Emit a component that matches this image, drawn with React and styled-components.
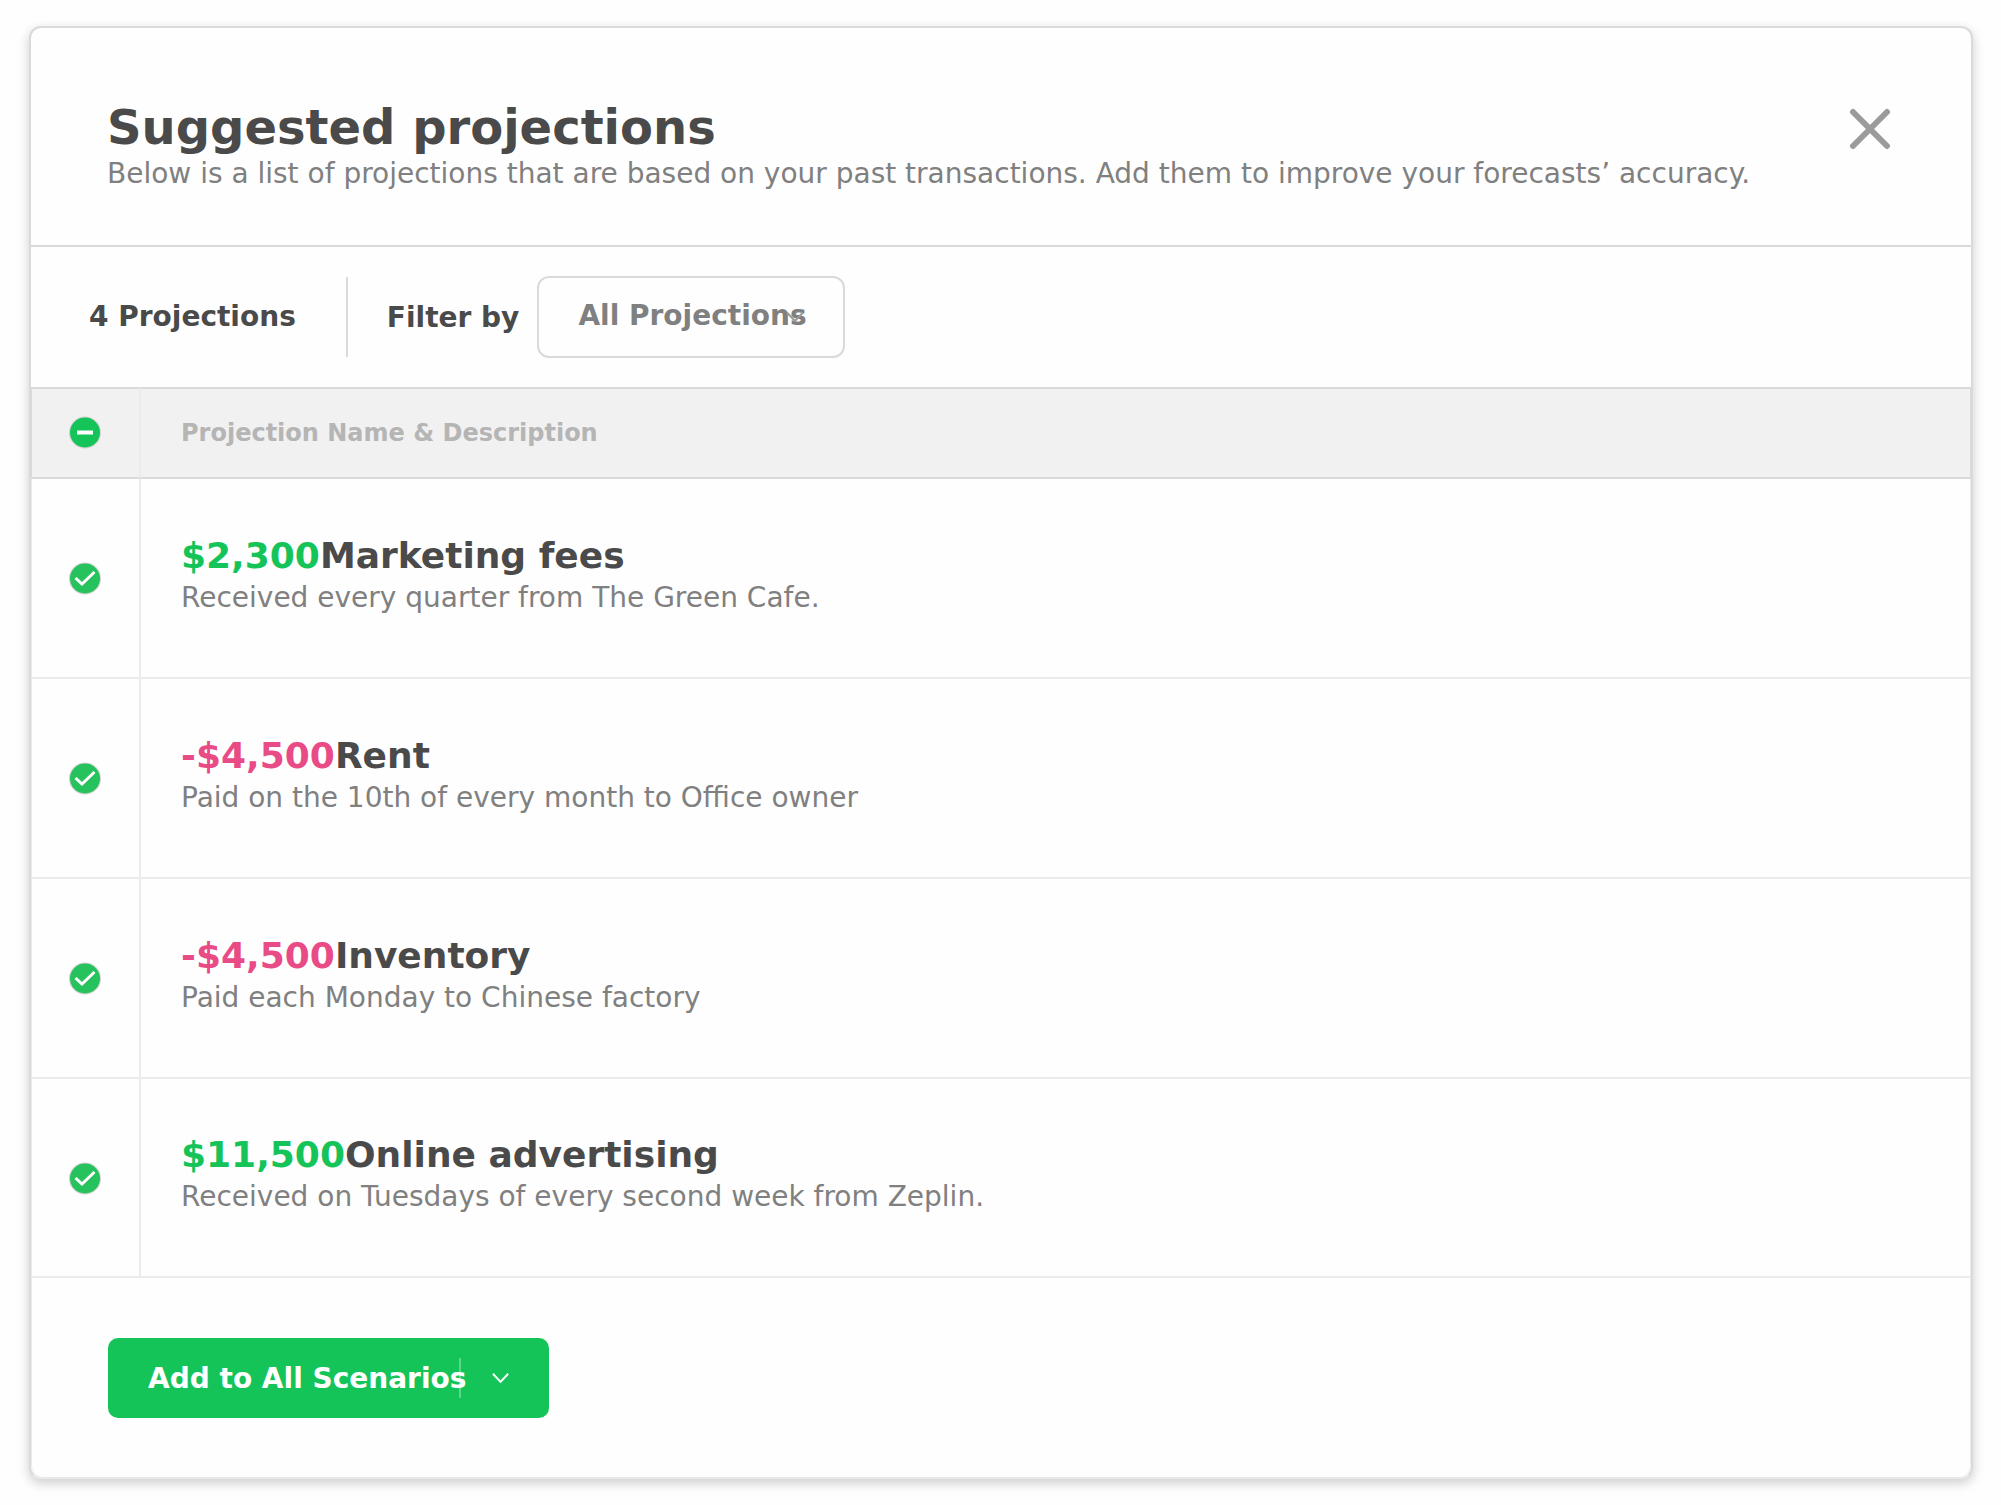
import React, { useState } from "react";
import styled, { createGlobalStyle } from "styled-components";

const Global = createGlobalStyle`
  * { box-sizing: border-box; }
  body {
    margin: 0;
    background: #fefefe;
    font-family: "DejaVu Sans", Verdana, sans-serif;
    color: #4a4a4a;
  }
`;

const Page = styled.main`
  padding: 26px 28px 26px 29px;
`;

const Card = styled.section`
  border: 2px solid #dadada;
  border-bottom-color: #e9e9e9;
  border-radius: 12px;
  background: #fefefe;
  box-shadow: 0 4px 12px rgba(0, 0, 0, 0.2);
`;

const Header = styled.header`
  display: flex;
  justify-content: space-between;
  align-items: flex-start;
  padding: 70px 80px 54px 76px;
  border-bottom: 2px solid #dadada;
`;

const Title = styled.h1`
  margin: 0;
  font-size: 48px;
  line-height: 58px;
  font-weight: 700;
`;

const Copy = styled.p`
  margin: 0;
  font-size: 28px;
  line-height: 35px;
  color: #808080;
`;

const CloseButton = styled.button`
  display: flex;
  margin: 10px 0 0;
  padding: 0;
  border: 0;
  background: none;
  cursor: pointer;
`;

const Toolbar = styled.div`
  display: flex;
  align-items: center;
  height: 140px;
  padding-left: 58px;
  font-size: 28px;
  font-weight: 700;
`;

const Count = styled.span`
  padding-right: 50px;
  line-height: 80px;
  border-right: 2px solid #dadada;
`;

const FilterLabel = styled.label`
  margin: 0 18px 0 39px;
`;

const SelectBox = styled.div`
  position: relative;
  width: 308px;
`;

const Select = styled.select`
  display: block;
  width: 100%;
  height: 82px;
  padding: 0 0 4px 39px;
  appearance: none;
  border: 2px solid #dadada;
  border-radius: 12px;
  background: transparent;
  color: #808080;
  font: inherit;
`;

const SelectArrow = styled.span`
  position: absolute;
  right: 41px;
  top: 35px;
  display: flex;
  pointer-events: none;
`;

const Table = styled.table`
  width: 100%;
  border-collapse: separate;
  border-spacing: 0;
  text-align: left;
`;

const HeadCell = styled.th`
  height: 92px;
  padding: 0 0 0 ${(p) => (p.$pick ? 0 : 40)}px;
  width: ${(p) => (p.$pick ? "110px" : "auto")};
  border: 0 solid #dadada;
  border-width: 2px 0;
  border-right: ${(p) => (p.$pick ? "2px solid #ebebeb" : "1px solid #dadada")};
  border-left: ${(p) => (p.$pick ? "1px solid #dadada" : 0)};
  background: #f1f1f1;
  color: #b5b5b5;
  font-size: 24px;
  font-weight: 700;
`;

const Cell = styled.td`
  height: 200px;
  padding: 0 0 8px ${(p) => (p.$pick ? 0 : 40)}px;
  border: 0 solid #ebebeb;
  border-bottom-width: 2px;
  border-right-width: ${(p) => (p.$pick ? 2 : 1)}px;
  border-left-width: ${(p) => (p.$pick ? 1 : 0)}px;

  tr:last-child > & {
    height: 199px;
  }
`;

const Tick = styled.label`
  position: relative;
  display: flex;
  width: 32px;
  height: 32px;
  margin: ${(p) => (p.$head ? "0 0 2px 37px" : "8px 0 0 37px")};
  cursor: pointer;

  input {
    position: absolute;
    inset: 0;
    width: 32px;
    height: 32px;
    margin: 0;
    opacity: 0;
    cursor: pointer;
  }
`;

const RowTitle = styled.h2`
  margin: 0;
  font-size: 36px;
  line-height: 44px;
  font-weight: 700;
`;

const RowCopy = styled(Copy)`
  padding-top: 2px;
`;

const Amount = styled.span`
  color: ${(p) => (p.$negative ? "#e94b86" : "#15c459")};
`;

const Footer = styled.footer`
  padding: 60px 76px 59px;
  border: solid #ebebeb;
  border-width: 0 1px;
  border-radius: 0 0 12px 12px;
`;

const AddButton = styled.button`
  display: flex;
  align-items: center;
  width: 441px;
  height: 80px;
  padding: 0 40px;
  border: 0;
  border-radius: 10px;
  background: #15c459;
  color: #fff;
  font: inherit;
  font-size: 28px;
  font-weight: 700;
  text-align: left;
  white-space: nowrap;
  cursor: pointer;
`;

const AddText = styled.span`
  width: 311px;
`;

const Divider = styled.span`
  width: 2px;
  height: 40px;
  margin-right: 31px;
  background: rgba(255, 255, 255, 0.3);
`;

const Chevron = ({ color }) => (
  <svg width="18" height="12" viewBox="0 0 18 12" fill="none" aria-hidden="true">
    <path d="M1 1.500 9 10l8-8.500" stroke={color} strokeWidth="2" />
  </svg>
);

const TickIcon = ({ head, checked }) => (
  <svg width="32" height="34" viewBox="0 0 32 34" aria-hidden="true">
    <circle cx="16" cy="16.5" r="16" fill="#d2d2d2" />
    <circle cx="16" cy="16.5" r="15" fill={!checked ? "#fff" : head ? "#15c459" : "#25c25d"} />
    {checked && head && <path d="M8 16.5h16" stroke="#fff" strokeWidth="4" />}
    {checked && !head && (
      <path d="M6.500 16l6.500 6L25.500 10" fill="none" stroke="#fff" strokeWidth="3" />
    )}
  </svg>
);

const projections = [
  { amount: "$2,300", name: "Marketing fees", note: "Received every quarter from The Green Cafe." },
  { amount: "-$4,500", name: "Rent", note: "Paid on the 10th of every month to Office owner" },
  { amount: "-$4,500", name: "Inventory", note: "Paid each Monday to Chinese factory" },
  { amount: "$11,500", name: "Online advertising", note: "Received on Tuesdays of every second week from Zeplin." },
];

export default function App() {
  const [picked, setPicked] = useState(projections.map(() => true));
  const any = picked.some(Boolean);

  return (
    <Page>
      <Global />
      <Card>
        <Header>
          <div>
            <Title>Suggested projections</Title>
            <Copy>
              Below is a list of projections that are based on your past transactions. Add them to
              improve your forecasts’ accuracy.
            </Copy>
          </div>
          <CloseButton type="button" aria-label="Close">
            <svg width="42" height="42" viewBox="0 0 42 42" aria-hidden="true">
              <path d="M4 4l34 34M38 4L4 38" stroke="#9b9b9b" strokeWidth="6" strokeLinecap="round" />
            </svg>
          </CloseButton>
        </Header>
        <Toolbar>
          <Count>4 Projections</Count>
          <FilterLabel htmlFor="filter">Filter by</FilterLabel>
          <SelectBox>
            <Select id="filter">
              <option>All Projections</option>
            </Select>
            <SelectArrow>
              <Chevron color="#9b9b9b" />
            </SelectArrow>
          </SelectBox>
        </Toolbar>
        <Table>
          <thead>
            <tr>
              <HeadCell $pick>
                <Tick $head>
                  <input
                    type="checkbox"
                    aria-label="Select all projections"
                    checked={any}
                    onChange={() => setPicked(projections.map(() => !any))}
                  />
                  <TickIcon head checked={any} />
                </Tick>
              </HeadCell>
              <HeadCell>Projection Name &amp; Description</HeadCell>
            </tr>
          </thead>
          <tbody>
            {projections.map((p, i) => (
              <tr key={p.name}>
                <Cell $pick>
                  <Tick>
                    <input
                      type="checkbox"
                      aria-label={p.name}
                      checked={picked[i]}
                      onChange={() => setPicked(picked.map((v, k) => (k === i ? !v : v)))}
                    />
                    <TickIcon checked={picked[i]} />
                  </Tick>
                </Cell>
                <Cell>
                  <RowTitle>
                    <Amount $negative={p.amount.startsWith("-")}>{p.amount}</Amount>
                    {p.name}
                  </RowTitle>
                  <RowCopy>{p.note}</RowCopy>
                </Cell>
              </tr>
            ))}
          </tbody>
        </Table>
        <Footer>
          <AddButton type="button">
            <AddText>Add to All Scenarios</AddText>
            <Divider />
            <Chevron color="#fff" />
          </AddButton>
        </Footer>
      </Card>
    </Page>
  );
}
